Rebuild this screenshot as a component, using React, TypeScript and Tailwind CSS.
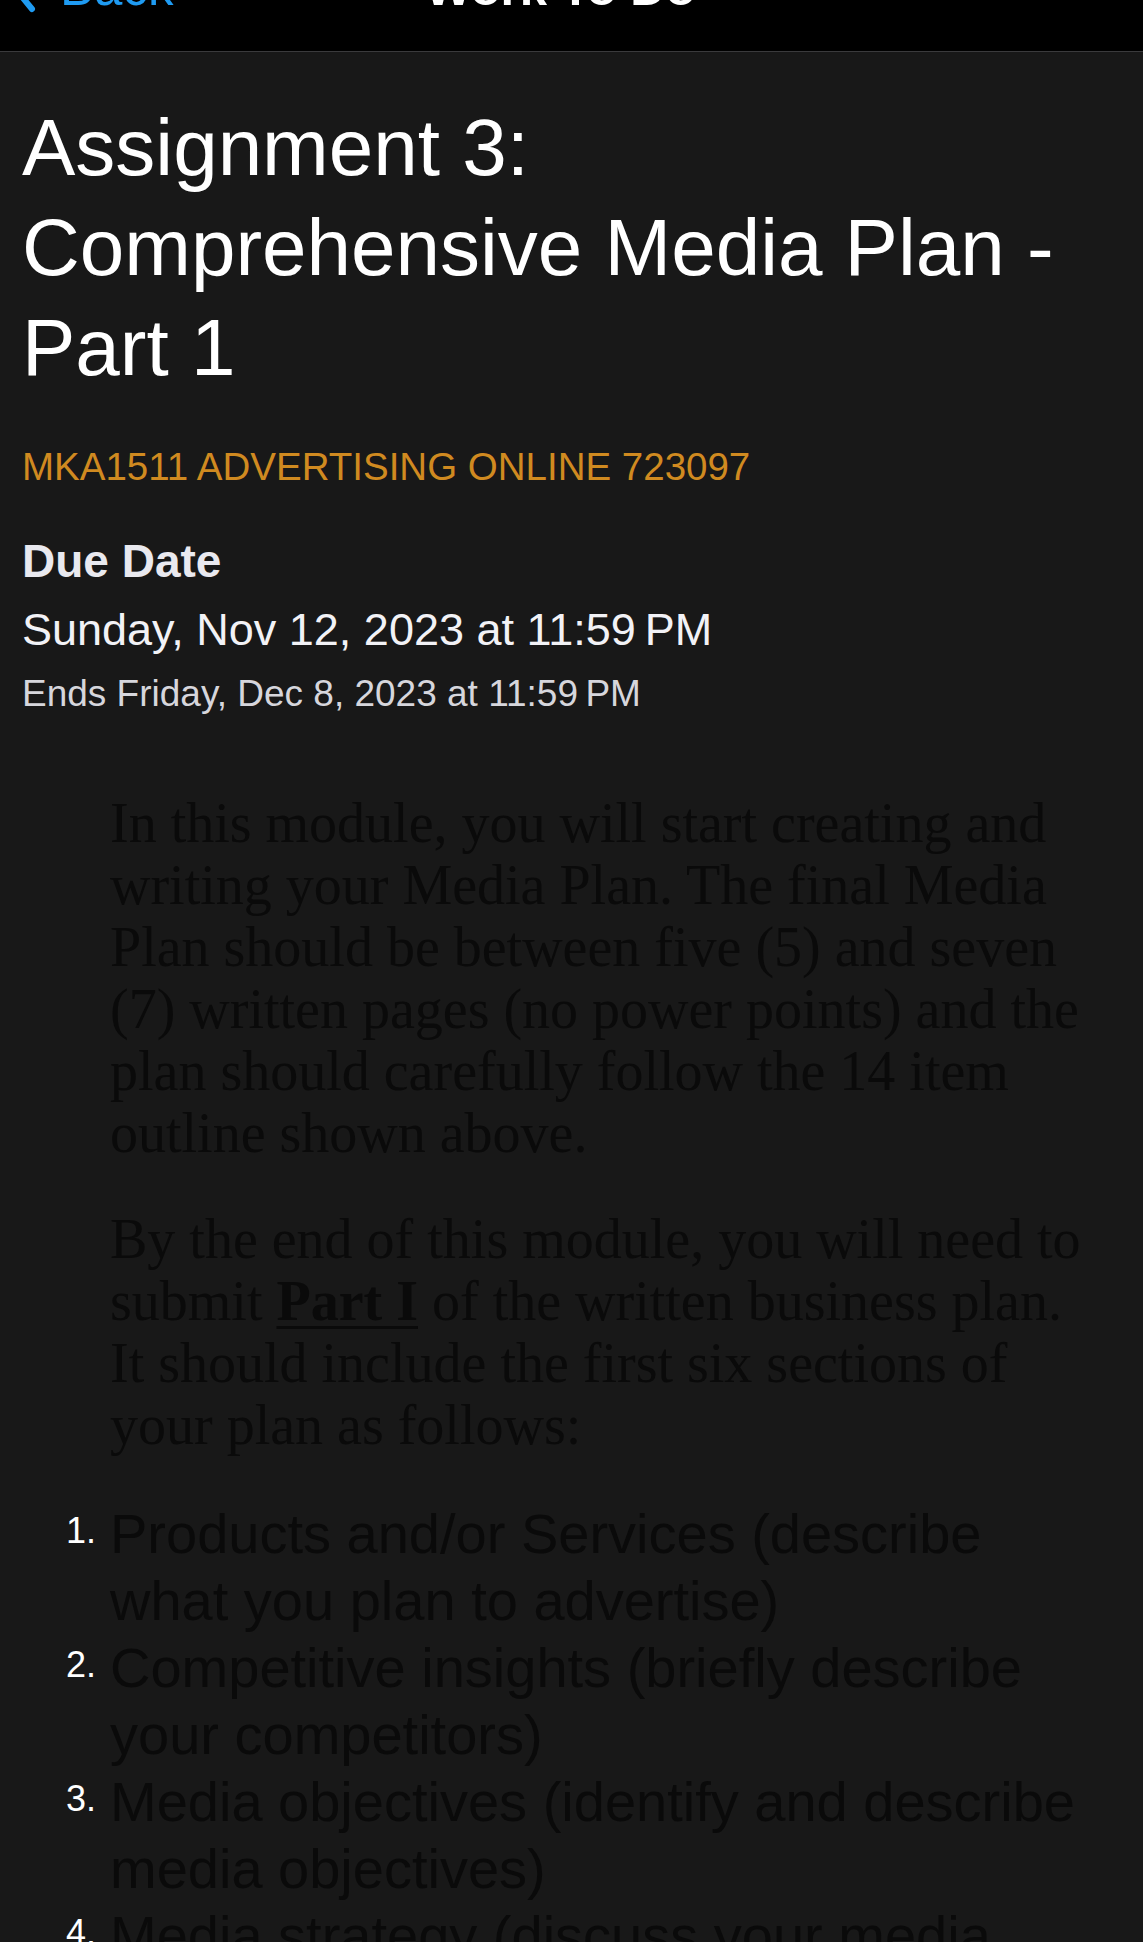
import React from 'react';

const sans = { fontFamily: '"Liberation Sans", Arial, Helvetica, sans-serif' };

interface ListItem {
  n: number;
  text: string;
}

const sections: ListItem[] = [
  { n: 1, text: 'Products and/or Services (describe what you plan to advertise)' },
  { n: 2, text: 'Competitive insights (briefly describe your competitors)' },
  { n: 3, text: 'Media objectives (identify and describe media objectives)' },
  { n: 4, text: 'Media strategy (discuss your media strategy)' },
];

const NavBar: React.FC = () => (
  <header className="h-[52px] overflow-hidden bg-black border-b border-[#3a3a3c]">
    <div className="grid grid-cols-[1fr_auto_1fr] items-start -mt-[36px]">
      {/* Back */}
      <div className="flex items-start">
        <svg width="28" height="49" viewBox="0 0 28 49" className="ml-[10px] shrink-0" aria-hidden="true">
          <path d="M22 6 L6 25.5 L22 45" fill="none" stroke="#1f9bf2" strokeWidth="6" strokeLinecap="round" strokeLinejoin="round" />
        </svg>
        <span className="ml-[22px] text-[51px] leading-[48px] text-[#1f9bf2]">Back</span>
      </div>
      <h1 className="mr-[22px] text-[49px] leading-[48px] font-bold text-white">Work To Do</h1>
      <div />
    </div>
  </header>
);

export default function App() {
  return (
    <div className="min-h-screen bg-[#181818]" style={sans}>
      <NavBar />
      <main className="px-[22px] pt-[46px] pb-10">
        <h2 className="max-w-[1060px] text-[80px] leading-[100px] font-normal text-white">
          Assignment 3: Comprehensive Media Plan - Part 1
        </h2>

        <p className="mt-[46px] text-[38.5px] leading-[46px] text-[#d08a20]">MKA1511 ADVERTISING ONLINE 723097</p>

        <div className="mt-[45px] text-[46px] leading-[52px] font-bold text-[#e9e9ef]">Due Date</div>
        <div className="mt-[17px] text-[45px] leading-[52px] text-[#f2f2f6]">Sunday, Nov 12, 2023 at 11:59&#8239;PM</div>
        <div className="mt-[16px] text-[37px] leading-[44px] text-[#d6d6dc]">Ends Friday, Dec 8, 2023 at 11:59&#8239;PM</div>

        {/* Assignment description (rendered HTML, dark text on dark bg) */}
        <div className="mt-[76px] pl-[88px] pr-[21px] text-[#0a0a0a]">
          <div style={{ fontFamily: '"Liberation Serif", "Times New Roman", serif' }} className="text-[56px] leading-[62px]">
            <p>
              In this module, you will start creating and writing your Media Plan. The final Media Plan should be
              between five (5) and seven (7) written pages (no power points) and the plan should carefully follow the
              14 item outline shown above.
            </p>
            <p className="mt-[44px]">
              By the end of this module, you will need to submit{' '}
              <strong className="font-bold underline decoration-[3px] underline-offset-[6px]">Part I</strong> of the
              written business plan. It should include the first six sections of your plan as follows:
            </p>
          </div>

          <ol className="mt-[44px]">
            {sections.map((item) => (
              <li key={item.n} className="flex -ml-[88px]">
                <span className="w-[88px] shrink-0 pr-[14px] mt-[13px] text-right text-[36px] leading-[36px] text-white">
                  {item.n}.
                </span>
                <span className="text-[56px] leading-[67px]">{item.text}</span>
              </li>
            ))}
          </ol>
        </div>
      </main>
    </div>
  );
}
